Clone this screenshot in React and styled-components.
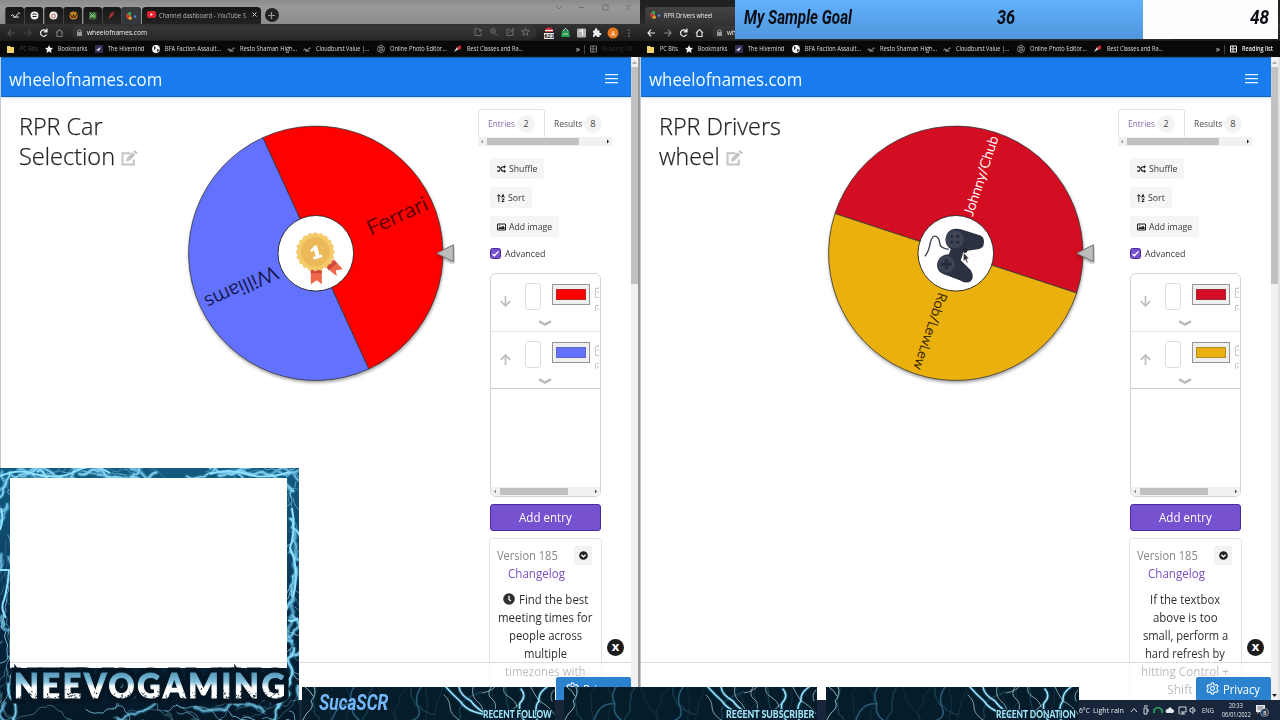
import React, { useLayoutEffect, useRef, useState } from 'react';
import styled, { createGlobalStyle, css } from 'styled-components';

const GlobalStyle = createGlobalStyle`
  * { box-sizing: border-box; }
  html, body { margin: 0; padding: 0; overflow: hidden; background: #fff; }
  body { font-family: 'Open Sans', 'Noto Sans', sans-serif; color: #363636; }
  svg { display: block; flex: none; }
`;

/* ---------- text condensed or widened to a given width ---------- */

const FitBox = styled.span`
  display: inline-block;
  flex: none;
  width: ${(p) => p.$width}px;
  white-space: nowrap;
  text-align: left;
`;
const FitInner = styled.span`
  display: inline-block;
  transform-origin: 0 50%;
`;

function Fit({ width, children }) {
  const ref = useRef(null);
  const [scale, setScale] = useState(1);
  useLayoutEffect(() => {
    const natural = ref.current.offsetWidth;
    if (natural) setScale(width / natural);
  }, [width, children]);
  return (
    <FitBox $width={width}>
      <FitInner ref={ref} style={{ transform: `scaleX(${scale})` }}>{children}</FitInner>
    </FitBox>
  );
}

/* ---------- desktop ---------- */

const Desktop = styled.div`
  position: relative;
  width: 1280px;
  height: 720px;
  display: flex;
  flex-direction: column;
  overflow: hidden;
`;
const Windows = styled.div`
  display: flex;
  height: 700px;
`;
const Window = styled.section`
  position: relative;
  width: 640px;
  height: 700px;
  display: flex;
  flex-direction: column;
  overflow: hidden;
  background: #fff;
`;

/* ---------- browser chrome ---------- */

const TabStrip = styled.div`
  height: 24px;
  display: flex;
  align-items: flex-end;
  padding-left: 5px;
  background: ${(p) => (p.$active ? 'linear-gradient(#202020, #282828)' : 'linear-gradient(#8b8b8b, #999 30%, #8d8d8d)')};
`;
const PinnedTab = styled.div`
  width: ${(p) => (p.$current ? 20 : 19)}px;
  height: 17px;
  margin-right: ${(p) => (p.$current ? 0.5 : 0.4)}px;
  display: flex;
  align-items: center;
  justify-content: center;
  border-radius: 3px 3px 0 0;
  border-left: 1px solid #454545;
  background: ${(p) => (p.$current ? '#34383b' : 'linear-gradient(#171717, #252525)')};
`;
const WideTab = styled.div`
  width: ${(p) => p.$width}px;
  height: 17px;
  display: flex;
  align-items: center;
  gap: 3px;
  padding: 0 5px 2px;
  border-radius: 4px 4px 0 0;
  color: ${(p) => (p.$light ? '#eee' : '#b4b4b4')};
  font-size: 7.5px;
  background: ${(p) => (p.$light ? 'linear-gradient(#444, #333)' : 'linear-gradient(#151515, #222)')};
`;
const NewTab = styled.div`
  width: 14px;
  height: 14px;
  margin: 0 0 2px 4px;
  border-radius: 50%;
  background: #222;
  display: flex;
  align-items: center;
  justify-content: center;
`;
const WindowButtons = styled.div`
  margin-left: auto;
  align-self: flex-start;
  padding: 3px 9px 0 0;
`;
const Toolbar = styled.div`
  height: 17px;
  display: flex;
  align-items: center;
  padding-left: 6px;
  background: linear-gradient(#333, #1c1c1c);
`;
const NavIcons = styled.div`
  width: 66px;
`;
const AddressBar = styled.div`
  width: 465px;
  height: 14px;
  display: flex;
  align-items: center;
  gap: 5px;
  padding: 0 5px 1px;
  border-radius: 7px;
  background: linear-gradient(#383838, #292929);
  color: #f1f1f1;
  font-size: 7.8px;
`;
const Spacer = styled.div`
  flex: 1;
`;
const Extensions = styled.div`
  display: flex;
  padding-left: 6px;
`;
const Bookmarks = styled.div`
  height: 16px;
  display: flex;
  align-items: center;
  padding-left: 7px;
  background: #080808;
  color: #dcdcdc;
  font-size: 6.8px;
  line-height: 14px;
`;
const Bookmark = styled.div`
  width: ${(p) => p.$slot}px;
  display: flex;
  align-items: center;
  gap: 4px;
  color: ${(p) => (p.$dim ? '#444' : 'inherit')};
`;
const ReadingList = styled.div`
  display: flex;
  align-items: center;
  gap: 4px;
  margin-left: auto;
  padding-right: 7px;
  font-weight: 600;
  color: ${(p) => (p.$dim ? '#262626' : '#eee')};
`;
const Chevrons = styled.span`
  color: #ccc;
  font-size: 9px;
  font-weight: 400;
  line-height: 12px;
`;
const Divider = styled.span`
  width: 1px;
  height: 9px;
  background: #444;
`;

/* ---------- page ---------- */

const Viewport = styled.div`
  flex: 1;
  display: flex;
  min-height: 0;
`;
const Page = styled.div`
  position: relative;
  width: 631px;
  display: flex;
  flex-direction: column;
  border-left: 1px solid #c3c8cd;
`;
const SiteHeader = styled.header`
  height: 40px;
  flex: none;
  display: flex;
  align-items: center;
  justify-content: space-between;
  padding: 3px 13px 0 8px;
  border-top: 1px solid #14589f;
  border-bottom: 1px solid #1262b8;
  background: #187bee;
  color: #eefcff;
  font-size: 17.5px;
  box-shadow: 0 1px 2px #c7ddf3;
`;
const Main = styled.main`
  display: flex;
  height: 603px;
  overflow: hidden;
`;
const TitleColumn = styled.div`
  width: 178px;
  padding: 14px 0 0 18px;
`;
const Title = styled.h1`
  margin: 0;
  font-size: 24.5px;
  line-height: 30px;
  font-weight: 300;
  color: #222;
  -webkit-text-stroke: 0.25px #222;
`;
const TitleLine = styled.div`
  display: flex;
  align-items: center;
  gap: 6px;
  height: 30px;
`;
const EditHolder = styled.div`
  padding-top: 3px;
`;
const WheelHolder = styled.div`
  width: 299px;
  padding-top: 17px;
`;
const Side = styled.aside`
  width: 137px;
  padding-top: 12px;
  font-size: 9.3px;
`;
const Tabs = styled.div`
  width: 135px;
  height: 28px;
  display: flex;
`;
const Tab = styled.div`
  width: 67px;
  display: flex;
  align-items: center;
  gap: 2px;
  padding-left: ${(p) => (p.$active ? 9 : 8)}px;
  border: 1px solid ${(p) => (p.$active ? '#e3e3e3' : 'transparent')};
  border-bottom: 0;
  border-radius: 3px 3px 0 0;
  color: ${(p) => (p.$active ? '#8569ad' : '#484848')};
`;
const Count = styled.span`
  width: 18px;
  height: 18px;
  border-radius: 50%;
  background: #f3f3f3;
  color: #444;
  text-align: center;
  line-height: 18px;
`;
const HScroll = styled.div`
  width: ${(p) => p.$track || 134}px;
  height: 9px;
  display: flex;
  align-items: center;
  justify-content: space-between;
  padding: 0 2px;
  background: #f1f1f1;
`;
const HThumb = styled.div`
  width: ${(p) => p.$width}px;
  height: 100%;
  border: solid #f1f1f1;
  border-width: 1px 0;
  margin-right: auto;
  margin-left: ${(p) => p.$offset}px;
  background: #c1c1c1;
`;
const Controls = styled.div`
  display: flex;
  flex-direction: column;
  align-items: flex-start;
  padding: 12px 0 0 12px;
`;
const GreyButton = styled.div`
  height: 21px;
  margin-bottom: 8px;
  padding: 0 7px;
  display: flex;
  align-items: center;
  gap: 3px;
  border-radius: 2px;
  background: #f5f5f5;
  color: #363636;
`;
const Advanced = styled.div`
  display: flex;
  align-items: center;
  gap: 4px;
  height: 13px;
  margin-top: 2px;
`;
const EntryBox = styled.div`
  width: 111px;
  height: 224px;
  margin-top: 13px;
  display: flex;
  flex-direction: column;
  border: 1.5px solid #d4d4d4;
  border-radius: 6px;
  overflow: hidden;
`;
const EntryRow = styled.div`
  height: 57.5px;
  flex: none;
  border-bottom: 1px solid ${(p) => (p.$last ? '#cfcfcf' : '#e8e8e8')};
  display: flex;
  flex-direction: column;
  align-items: center;
  gap: 9px;
  padding: 9px 1px 0 0;
`;
const EntryFields = styled.div`
  width: 108px;
  height: 28px;
  display: flex;
  align-items: flex-start;
  overflow: hidden;
`;
const MoveIcon = styled.div`
  width: 34px;
  padding: 13px 0 0 9px;
`;
const NameInput = styled.div`
  width: 16px;
  height: 27px;
  margin-right: 11px;
  border: 1px solid #dedede;
  border-radius: 3px;
`;
const ColorInput = styled.div`
  width: 38px;
  height: 21px;
  margin: 1px 4px 0 0;
  padding: 4px 3px;
  border: 1px solid #949494;
  background: #efefef;
`;
const Swatch = styled.div`
  height: 100%;
  background: ${(p) => p.$color};
  border: 1px solid rgba(90, 90, 90, 0.4);
`;
const AddEntry = styled.div`
  width: 111px;
  height: 27px;
  margin-top: 6.5px;
  display: flex;
  align-items: center;
  justify-content: center;
  border: 1px solid #4b2ca0;
  border-radius: 3px;
  background: #7752d0;
  color: #fff;
  font-size: 12px;
`;
const VersionCard = styled.div`
  width: 113px;
  height: 175px;
  margin-top: 7px;
  margin-left: -1px;
  padding: 7px 9px 7px 7px;
  border: 1px solid #e2e2e2;
  border-radius: 3px;
  font-size: 11.8px;
  line-height: 18px;
  color: #2f2f2f;
`;
const VersionRow = styled.div`
  display: flex;
  justify-content: space-between;
  height: 18px;
  color: #858585;
`;
const Toggle = styled.div`
  width: 18px;
  height: 19px;
  background: #f3f3f3;
  display: flex;
  align-items: center;
  justify-content: center;
`;
const Changelog = styled.div`
  padding-left: 11px;
  color: #7b4fc0;
`;
const Tip = styled.div`
  margin: 8px -8px 0 -7px;
`;
const TipLine = styled.div`
  height: 18px;
  display: flex;
  justify-content: center;
  align-items: center;
  gap: 4px;
`;
const Footer = styled.div`
  position: absolute;
  left: 0;
  right: 0;
  bottom: 0;
  height: 38px;
  border-top: 1px solid #dcdcdc;
  background: rgba(255, 255, 255, 0.68);
`;
const CloseBadge = styled.div`
  position: absolute;
  right: 7px;
  bottom: 44px;
  width: 17px;
  height: 17px;
  border-radius: 50%;
  background: #1c1c1c;
  color: #fff;
  font: 700 13px/14px 'Open Sans', sans-serif;
  text-align: center;
`;
const Privacy = styled.div`
  position: absolute;
  right: 0;
  bottom: 0;
  width: 75px;
  height: 23px;
  display: flex;
  align-items: center;
  gap: 4px;
  padding-left: 10px;
  border-radius: 2px 2px 0 0;
  background: #2b83cf;
  color: #fff;
  font-size: 11.8px;
`;
const VScroll = styled.div`
  width: 9px;
  display: flex;
  flex-direction: column;
  align-items: center;
  padding: 4px 0 3px;
  background: #f1f1f1;
  border-right: ${(p) => (p.$edge ? '2px solid #9a9a9a' : '2px solid #e2e2e2')};
`;
const VThumb = styled.div`
  width: 7px;
  height: 217px;
  margin: 3px 0 auto;
  background: #c1c1c1;
`;

/* ---------- stream overlays ---------- */

const brush = css`
  font-family: 'Liberation Sans Narrow', 'Roboto', sans-serif;
  font-style: italic;
  font-weight: 700;
`;
const GoalBar = styled.div`
  position: absolute;
  left: 735px;
  top: 0;
  width: 543px;
  height: 39px;
  display: flex;
  align-items: center;
  background: linear-gradient(90deg, transparent 408px, #fdfdfd 408px), linear-gradient(#63b1fc, #4f96dd);
  color: #0a0d14;
  font-size: 20px;
  padding: 0 9px 5px 9px;
  ${brush}
`;
const GoalGap = styled.div`
  width: ${(p) => p.$width}px;
`;
const CamFrame = styled.div`
  position: absolute;
  left: 0;
  top: 468px;
`;
const camLettering = css`
  position: absolute;
  left: 14px;
  top: 194px;
  height: 46px;
  font-family: 'Lato', sans-serif;
  font-weight: 900;
  font-size: 34px;
  line-height: 46px;
  letter-spacing: 3px;
`;
const CamName = styled.div`
  ${camLettering}
  color: #041523;
  -webkit-text-stroke: 11px #041523;
`;
const CamNameFace = styled.div`
  ${camLettering}
  span span {
    -webkit-text-stroke: 1.2px transparent;
    background: linear-gradient(#5a9dbd 12px, #86c2dc 20px, #fff 25px);
    background-clip: text;
    -webkit-background-clip: text;
    color: transparent;
  }
`;
const CamSpeckles = styled.div`
  position: absolute;
  left: 12px;
  top: 219px;
`;
const Alerts = styled.div`
  position: absolute;
  left: 302px;
  top: 687px;
  display: flex;
  gap: 9px;
`;
const Alert = styled.div`
  position: relative;
  width: 253px;
  height: 33px;
  overflow: hidden;
`;
const AlertName = styled.div`
  position: absolute;
  left: 17px;
  top: 2px;
  color: #74b9fb;
  font-size: 22px;
  line-height: 28px;
  ${brush}
`;
const AlertLabel = styled.div`
  position: absolute;
  right: 3px;
  bottom: 0;
  color: #a5e3f7;
  font-size: 10.5px;
  line-height: 12px;
  -webkit-text-stroke: 2px #06202f;
  paint-order: stroke fill;
  font-family: 'Lato', sans-serif;
  font-weight: 900;
`;

/* ---------- taskbar ---------- */

const Taskbar = styled.div`
  height: 20px;
  display: flex;
  align-items: center;
  padding-left: 1079px;
  background: #19253a;
  color: #e8ecf2;
  font-size: 7.3px;
  line-height: 9px;
`;
const Weather = styled.div`
  width: 51px;
  display: flex;
  gap: 3px;
`;
const Tray = styled.div`
  width: 72px;
`;
const Lang = styled.div`
  width: 15px;
`;
const Clock = styled.div`
  width: 38px;
  display: flex;
  flex-direction: column;
  align-items: center;
`;

/* ---------- lightning drawing ---------- */

function makeRandom(seed) {
  let s = seed;
  return () => {
    s = (s * 16807) % 2147483647;
    return s / 2147483647;
  };
}

function bolt(rand, x, y, angle, steps, size, wobble) {
  let d = `M${x.toFixed(1)} ${y.toFixed(1)}`;
  let a = angle;
  for (let i = 0; i < steps; i += 1) {
    const bend = (rand() - 0.5) * wobble;
    const mx = x + Math.cos(a + bend) * size * 0.6;
    const my = y + Math.sin(a + bend) * size * 0.6;
    a += (rand() - 0.5) * wobble * 0.6;
    x += Math.cos(a) * size;
    y += Math.sin(a) * size;
    d += `Q${mx.toFixed(1)} ${my.toFixed(1)} ${x.toFixed(1)} ${y.toFixed(1)}`;
  }
  return d;
}

const camBolts = (() => {
  const r = makeRandom(4711);
  const list = [];
  const add = (x, y, a, n) => {
    for (let i = 0; i < n; i += 1) {
      list.push({ d: bolt(r, x(), y(), a + (r() - 0.5) * 0.7, 5 + Math.floor(r() * 5), 9, 2.1), w: r() > 0.65 ? 1.6 + r() : 0.4 + r() * 0.5, o: 0.45 + r() * 0.55 });
    }
  };
  add(() => r() * 290, () => r() * 10, 0, 46);
  add(() => r() * 10, () => r() * 240, Math.PI / 2, 30);
  add(() => 288 + r() * 10, () => r() * 240, Math.PI / 2, 32);
  add(() => r() * 290, () => 236 + r() * 16, 0.2, 22);
  return list;
})();

function CamLightning() {
  return (
    <svg width="299" height="252" viewBox="0 0 299 252">
      <defs>
        <clipPath id="ring">
          <path clipRule="evenodd" d="M0 0H299V252H0ZM10 10V200H287V10Z" />
        </clipPath>
        <linearGradient id="camBg" x1="0" y1="0" x2="0" y2="1">
          <stop offset="0" stopColor="#145a80" />
          <stop offset="0.35" stopColor="#0d4468" />
          <stop offset="0.65" stopColor="#06263f" />
          <stop offset="1" stopColor="#041826" />
        </linearGradient>
      </defs>
      <g clipPath="url(#ring)">
        <rect width="299" height="252" fill="url(#camBg)" />
        {camBolts.map((b, i) => (
          <g key={i} fill="none" strokeLinecap="round">
            {b.w > 1.5 && <path d={b.d} stroke="#3a9fce" strokeWidth={b.w + 2.5} opacity="0.4" />}
            <path d={b.d} stroke="#8ed9f7" strokeWidth={b.w} opacity={b.o} />
          </g>
        ))}
        <path d="M0 102H9Q8 118 4 132Q0 140 6 150M292 40Q296 62 290 80Q300 100 293 130M298 150Q292 155 288 152M0 62Q4 52 1 40M0 8Q20 0 34 6Q60 12 76 3T110 5M210 6Q228 0 246 6T290 4" fill="none" stroke="#8ee2ff" strokeWidth="2" />
      </g>
    </svg>
  );
}

const speckles = (() => {
  const r = makeRandom(52);
  let d = '';
  for (let i = 0; i < 300; i += 1) {
    const x = r() * 270;
    const y = 2 + Math.sqrt(r()) * 11;
    d += `M${x.toFixed(1)} ${y.toFixed(1)}l${((r() - 0.5) * 4).toFixed(1)} ${((r() - 0.5) * 4).toFixed(1)}`;
  }
  return d;
})();

const faintBolts = (() => {
  const r = makeRandom(909);
  return Array.from({ length: 15 }, (_, i) => bolt(r, 12 + i * 16, i % 2 ? 34 : -1, i % 2 ? -1.3 : 1.4, 5, 8, 1.3));
})();

function AlertLightning() {
  return (
    <svg width="253" height="33" viewBox="0 0 253 33">
      <rect width="253" height="33" fill="#051c2a" />
      <g fill="none" strokeLinecap="round">
        {faintBolts.map((d, i) => (
          <path key={i} d={d} stroke="#1d475e" strokeWidth={i % 3 ? 0.6 : 1.4} opacity="0.8" />
        ))}
        <path d="M12 0Q15 8 9 14Q13 20 5 26Q2 30 1 33M3 0Q9 4 11 9" stroke="#a8ddea" strokeWidth="0.8" />
        <path d="M52 0Q46 8 51 17Q48 26 57 33M51 17Q36 15 30 33M119 0Q112 10 116 20T111 33" stroke="#285a75" strokeWidth="1.6" />
        <path d="M144 0Q151 8 158 14Q163 22 173 25L184 28M157 0Q158 8 169 14Q173 20 181 25M219 2Q225 9 218 16Q216 25 222 33M245 0Q236 6 237 14Q232 19 235 33" stroke="#286f91" strokeWidth="3.5" opacity="0.5" />
        <path d="M144 0Q151 8 158 14Q163 22 173 25L184 28M157 0Q158 8 169 14Q173 20 181 25M219 2Q225 9 218 16Q216 25 222 33M245 0Q236 6 237 14Q232 19 235 33" stroke="#9fe3fb" strokeWidth="1.5" />
        <path d="M171 0Q169 9 175 14T182 27M189 0Q184 8 190 12T192 26M142 8Q148 13 148 20T157 33M180 6Q190 4 193 0M202 0Q200 6 207 10T215 20M218 16L206 27M237 14Q247 19 252 27M229 0Q232 7 237 14M252 3Q247 8 250 14" stroke="#b8e6f1" strokeWidth="0.65" />
      </g>
    </svg>
  );
}

/* ---------- wheels ---------- */

function Wheel({ id, cut, colorA, colorB, labelA, labelB, size, lenA, lenB, startA, startB, inkA, inkB, family, children }) {
  const rad = (cut * Math.PI) / 180;
  const R = 127.2;
  const px = Math.cos(rad) * R;
  const py = Math.sin(rad) * R;
  return (
    <svg width="280" height="280" viewBox="0 0 280 280">
      <defs>
        <filter id={id} x="-10%" y="-10%" width="120%" height="120%">
          <feDropShadow dx="0.5" dy="2" stdDeviation="1.6" floodColor="#000" floodOpacity="0.35" />
        </filter>
      </defs>
      <g transform="translate(136.8 139.3)">
        <g filter={`url(#${id})`} stroke="#333" strokeWidth="0.8">
          <path d={`M${px} ${py}A${R} ${R} 0 0 1 ${-px} ${-py}Z`} fill={colorA} />
          <path d={`M${-px} ${-py}A${R} ${R} 0 0 1 ${px} ${py}Z`} fill={colorB} />
        </g>
        <g fontFamily={family} fontSize={size} fontWeight="300" strokeWidth="0.35">
          <text transform={`rotate(${cut + 90})`} x={startA} y={size * 0.33} textLength={lenA} lengthAdjust="spacingAndGlyphs" fill={inkA} stroke={inkA}>{labelA}</text>
          <text transform={`rotate(${cut + 270})`} x={startB} y={size * 0.33} textLength={lenB} lengthAdjust="spacingAndGlyphs" fill={inkB} stroke={inkB}>{labelB}</text>
        </g>
        <circle r="37.8" fill="#fff" stroke="#222" strokeWidth="0.9" />
        {children}
        <path d="M121 0L137.500 -8.500V8.500Z" fill="#bdbdbd" stroke="#6f6f6f" strokeWidth="1" filter={`url(#${id})`} />
      </g>
    </svg>
  );
}

function Medal() {
  const teeth = Array.from({ length: 40 }, (_, i) => {
    const r = i % 2 ? 17.9 : 19.8;
    const a = (i * Math.PI) / 20;
    return `${(Math.cos(a) * r).toFixed(2)},${(Math.sin(a) * r).toFixed(2)}`;
  }).join(' ');
  return (
    <g>
      <path d="M-5 15H6V31L1 27L-5 31Z" fill="#ee684b" />
      <path d="M9 13L18 6L27 16L20 17L21 23Z" fill="#ee684b" />
      <path d="M-5 17H6V20H-5ZM11 14L19 8L21 10L13 17Z" fill="#c94938" />
      <g transform="translate(-0.500 -1.500)">
        <polygon points={teeth} fill="#f5cb69" />
        <circle r="14.5" fill="#ecb958" />
        <path d="M-5 -1.500L-1 -6L1.500 -6.500L4.200 3.200L6.500 2.600L7.200 5.200L-1.500 8L-2.300 5.300L0.300 4.500L-1.300 -1.500L-3.800 0.500Z" fill="#fff" />
      </g>
    </g>
  );
}

function Gamepad() {
  return (
    <g>
      <path d="M-7 -4Q-16 -5 -16 -10Q-17 -18 -22 -17Q-25 -15 -26 -8Q-28 0 -31 3" fill="none" stroke="#343a49" strokeWidth="1.300" />
      <path d="M-9 -19Q-5 -26 5 -24L24 -18Q29 -16 28 -10Q28 -5 22 -4L8 -2L5 7L15 17Q19 24 15 28Q10 31 4 27L-12 21Q-21 17 -18 8Q-15 1 -7 1L-5 -4Q-13 -10 -9 -19Z" fill="#2b3140" />
      <circle cx="-1" cy="-14" r="9" fill="#3d4456" />
      <circle cx="-9.500" cy="11" r="8.500" fill="#3d4456" />
      <g fill="#252a37">
        <circle cx="-4" cy="-17" r="1.500" /><circle cx="2" cy="-17" r="1.500" />
        <circle cx="-4" cy="-11" r="1.500" /><circle cx="2" cy="-11" r="1.500" />
        <circle cx="9" cy="-3" r="2.600" />
        <path d="M-11 6H-8V9.500H-4V12.500H-8V16H-11V12.500H-15V9.500H-11Z" />
      </g>
      <path d="M7.500 -1V8L9.500 6.500L11 10L12.300 9L11 6L13 5Z" fill="#333" stroke="#eee" strokeWidth="0.700" />
    </g>
  );
}

/* ---------- small icons ---------- */

const EditIcon = () => (
  <svg width="18" height="16" viewBox="0 0 18 16" fill="none" stroke="#c4c4c4" strokeWidth="2">
    <path d="M9.500 3.200H1.500V14.500H12.800V9.500" />
    <path d="M5 11.500L5.800 8L11.500 2.300L14.200 5L8.500 10.700ZM12.300 1.500L13.800 0L16.800 2.800L15.100 4.300Z" fill="#c4c4c4" stroke="none" />
  </svg>
);
const MenuIcon = () => (
  <svg width="13" height="10" viewBox="0 0 13 10" stroke="#e6f6ff" strokeWidth="1.200">
    <path d="M0 0.700H13M0 4.700H13M0 8.700H13" />
  </svg>
);
const Arrow = ({ left, color = '#333' }) => (
  <svg width="4" height="5" viewBox="0 0 4 5"><path d={left ? 'M3 0.500V4.500L1 2.500Z' : 'M1 0.500V4.500L3 2.500Z'} fill={color} /></svg>
);
const VArrow = ({ down, color }) => (
  <svg width="5" height="3" viewBox="0 0 5 3"><path d={down ? 'M0 0H5L2.500 3Z' : 'M0 3H5L2.500 0Z'} fill={color} /></svg>
);
const ShuffleIcon = () => (
  <svg width="9" height="8" viewBox="0 0 9 8" fill="none" stroke="#222" strokeWidth="1.300">
    <path d="M0 1.800H2L5.500 6.200H8M0 6.200H2L3 5M4.300 3.200L5.500 1.800H8" />
    <path d="M7 0L9 1.800L7 3.600ZM7 4.400L9 6.200L7 8Z" fill="#222" stroke="none" />
  </svg>
);
const SortIcon = () => (
  <svg width="8" height="8" viewBox="0 0 8 8" fill="none" stroke="#222" strokeWidth="1">
    <path d="M1.800 8V1M0.200 2.500L1.800 0.600L3.400 2.500M4.600 3.500L6 0.500L7.400 3.500M5 2.600H7M4.800 5H7.200L4.800 7.500H7.300" />
  </svg>
);
const ImageIcon = () => (
  <svg width="9" height="8" viewBox="0 0 9 8" fill="none" stroke="#222" strokeWidth="1">
    <path d="M0.500 1H8.500V7H0.500Z" />
    <path d="M1.500 6V5L3 3.800L4 4.600L6 2.800L7.600 4.500V6Z" fill="#222" stroke="none" />
    <circle cx="2.600" cy="2.600" r="0.600" fill="#222" stroke="none" />
  </svg>
);
const CheckIcon = () => (
  <svg width="11" height="11" viewBox="0 0 11 11">
    <rect x="0.500" y="0.500" width="10" height="10" rx="2" fill="#7752d0" stroke="#4a2d9c" />
    <path d="M2.500 6L4.300 7.700L8.500 3.500" fill="none" stroke="#fff" strokeWidth="1.400" />
  </svg>
);
const MoveArrow = ({ up }) => (
  <svg width="11" height="11" viewBox="0 0 11 11" fill="none" stroke="#bdbdbd" strokeWidth="1.700">
    <path d={up ? 'M5.500 11V1M0.800 5.800L5.500 1L10.200 5.800' : 'M5.500 0V10M0.800 5.200L5.500 10L10.200 5.200'} />
  </svg>
);
const RowChevron = () => (
  <svg width="14" height="7" viewBox="0 0 14 7" fill="none" stroke="#b8b8b8" strokeWidth="2.300"><path d="M1 1.200L7 4.600L13 1.200" /></svg>
);
const ClippedIcons = () => (
  <svg width="5" height="28" viewBox="0 0 5 28" fill="none" stroke="#c6c6c6" strokeWidth="1">
    <path d="M5 5.500H1.500V14.500H5M3 9H5M3 5.500L5 3.500M5 22.500H1.500V30M3 26H5" />
  </svg>
);
const DownCircle = () => (
  <svg width="9" height="9" viewBox="0 0 9 9"><circle cx="4.500" cy="4.500" r="4.300" fill="#222" /><path d="M2.400 3.700L4.500 5.800L6.600 3.700" fill="none" stroke="#fff" strokeWidth="1.300" /></svg>
);
const ClockIcon = () => (
  <svg width="12" height="12" viewBox="0 0 12 12"><circle cx="6" cy="6" r="5.800" fill="#303030" /><path d="M6 2.800V6.400L7.800 8" fill="none" stroke="#fff" strokeWidth="1.300" /></svg>
);
const GearIcon = () => (
  <svg width="13" height="13" viewBox="0 0 24 24" fill="none" stroke="#fff" strokeWidth="1.900">
    <circle cx="12" cy="12" r="3.600" />
    <path d="M10 2H14L14.700 5L17 6.100L19.800 4.900L22.200 8L20.300 10.500V13.300L22.300 16L20 19.300L17 18.200L14.700 19.300L14 22H10L9.300 19.300L7 18.200L4 19.300L1.700 16L3.700 13.300V10.500L1.800 8L4.200 4.900L7 6.100L9.300 5Z" />
  </svg>
);
const WheelFavicon = () => (
  <svg width="11" height="8" viewBox="0 0 11 8">
    <path d="M5 4L1 1.500A4 4 0 0 0 2 7Z" fill="#d33b32" /><path d="M5 4L1 2A4 4 0 0 1 5 0Z" fill="#38a853" />
    <path d="M5 4L2 7A4 4 0 0 0 6 7Z" fill="#f0b323" /><circle cx="9" cy="4.500" r="1.300" fill="#4a7fe0" />
  </svg>
);
const tabIcons = [
  <path key="a" d="M0 5Q2 2 3 5T6 4T9 3M2 6H8" fill="none" stroke="#ddd" />,
  <g key="b"><circle cx="4.500" cy="4.500" r="4" fill="#eee" /><path d="M2.500 3.500Q4.500 2 6.500 3.500M2.500 5.500H6.500" stroke="#222" fill="none" /></g>,
  <g key="c"><circle cx="4.500" cy="4.500" r="4" fill="#f6eeee" /><circle cx="4.500" cy="5" r="2" fill="none" stroke="#b66" /></g>,
  <g key="d"><circle cx="4.500" cy="4.500" r="4" fill="#c68324" /><path d="M1 3L3.500 7L4.500 3.500L5.500 7L8 3" fill="none" stroke="#402508" /></g>,
  <g key="e"><rect x="1" y="1" width="7.500" height="7.500" fill="#35603a" /><path d="M2 2L7 7M7 2L2 7M2 5H8" stroke="#8fd089" /></g>,
  <path key="f" d="M1 8L4 2L8 0L5 4L8 3L4 6Z" fill="#b5373d" />,
];
const ToolIcons = () => (
  <svg width="58" height="10" viewBox="0 0 58 10" fill="none" stroke="#747474" strokeWidth="0.900">
    <path d="M3 1.500H1V8.500H7V6M4 1L7 4M5 4H7V2" />
    <circle cx="19" cy="4" r="2.300" /><path d="M21 6L23 8.500M18 4H20" />
    <path d="M36 2.500H33V8.500H39V5M35 6Q36 3 40 3M38 1L40 3L38 5" />
    <path d="M51.500 1L52.500 3.800H55.500L53.200 5.500L54 8.500L51.500 6.700L49 8.500L49.800 5.500L47.500 3.800H50.500Z" />
  </svg>
);
const ExtIcons = () => (
  <svg width="92" height="14" viewBox="0 0 92 14">
    <path d="M2 6Q2 1 6.500 1.500T10 6Z" fill="#ce2f38" /><path d="M2 4.500H10" stroke="#eee" strokeWidth="1.200" />
    <rect x="1" y="7" width="10" height="6" fill="#eee" />
    <text x="1.300" y="12.400" fontSize="5.800" fontWeight="700" fontFamily="Roboto" fill="#111">622</text>
    <path d="M19 4.500H26L27 11H18Z" fill="#239b51" /><path d="M20.500 5Q22.500 0 24.500 5M20 8H25" fill="none" stroke="#bfe5cb" />
    <rect x="34" y="2.500" width="9" height="9" rx="1" fill="#b4b4b4" /><path d="M36 5H39.500V9.500M38 4L40 3.500" stroke="#fff" fill="none" />
    <path d="M50 4.500H52Q51.500 2 53 2T54.500 4.500H56.500V7Q58.500 6.500 58.500 8T56.500 9V11H54Q54 9 52.500 9.500T51.500 11H50V8.500Q52 8 50 6.500Z" fill="#eee" />
    <circle cx="70" cy="7" r="5.500" fill="#e8771e" /><text x="68" y="9.500" fontSize="6.500" fontFamily="Roboto" fill="#fff">A</text>
    <path d="M86 3.500V5M86 6.500V8M86 9.500V11" stroke="#888" strokeWidth="1.200" />
  </svg>
);
function NavSvg({ active }) {
  const c = active ? '#e6e6e6' : '#555';
  return (
    <svg width="60" height="12" viewBox="0 0 60 12" fill="none" strokeWidth="1.200">
      <path d="M9 6H2M5 2.700L2 6L5 9.300" stroke={c} />
      <path d="M18 6H25M22 2.700L25 6L22 9.300" stroke={active ? '#888' : '#444'} />
      <path d="M40.500 4.500A3.200 3.200 0 1 0 40.600 7.500M41 1.500V4.800H37.800" stroke="#f0f0f0" />
      <path d="M50 6L53.500 2.500L57 6M51 5.500V9.500H56V5.500" stroke={active ? '#ddd' : '#777'} />
    </svg>
  );
}
const bookmarkIcons = {
  folder: <path d="M0 1H3L4 2H7V8H0Z" fill="#f3d36c" />,
  star: <path d="M4 0L5.200 2.700L8 3L6 5L6.500 8L4 6.500L1.500 8L2 5L0 3L2.800 2.700Z" fill="#f2f2f2" />,
  hive: <g><rect width="8" height="8" fill="#342f54" /><path d="M1 5L6 2L4 6Z" fill="#ddd" /></g>,
  globe: <g><circle cx="4" cy="4" r="3.900" fill="#f0f0f0" /><path d="M2 1L4 3L2 5ZM5 4L7.500 5L5 7Z" fill="#222" /></g>,
  wow: <path d="M0.500 5Q2 3 3 4.700T5.500 4T7.500 3.500M2 6H6.500" fill="none" stroke="#bbb" strokeWidth="0.900" />,
  photo: <g fill="none" stroke="#8b8b8b" strokeWidth="0.800"><circle cx="4" cy="4" r="3.600" /><path d="M1 2L6 3M5 0.500L5 6M7 5L2 5M3 7L3 2" /></g>,
  best: <g><path d="M0 7L3 2L5 4Z" fill="#ddd" /><path d="M3 2L7 0L7 4L4 5Z" fill="#c92f3a" /></g>,
};
const bookmarks = [
  { icon: 'folder', label: 'PC Bits', slot: 38, width: 18 },
  { icon: 'star', label: 'Bookmarks', slot: 50, width: 29.5 },
  { icon: 'hive', label: 'The Hivemind', slot: 57, width: 36.5 },
  { icon: 'globe', label: 'BFA Faction Assault...', slot: 74.5, width: 56 },
  { icon: 'wow', label: 'Resto Shaman High...', slot: 76.5, width: 57 },
  { icon: 'wow', label: 'Cloudburst Value |...', slot: 73.5, width: 53 },
  { icon: 'photo', label: 'Online Photo Editor...', slot: 77, width: 57 },
  { icon: 'best', label: 'Best Classes and Ra...', slot: 80, width: 56 },
];
const TrayIcons = () => (
  <svg width="67" height="14" viewBox="0 0 67 14" fill="none" stroke="#e8ecf2" strokeWidth="0.900">
    <path d="M1 9L4 5.500L7 9" />
    <path d="M14 5H17V11H14ZM14 3H18M18 6V9" />
    <path d="M24 10V7Q28 2 32 7V10M24 8V10M32 8V10" stroke="#2cae58" strokeWidth="1.600" />
    <path d="M36.500 9.500Q35 6.500 38 6.500Q40 3 42 6.500Q45 7 43 9.500Z" fill="#e8ecf2" />
    <path d="M49 4H56V9H51M53 9V11M50 11H55M49 4V11" />
    <path d="M60 6V8.500H61L63 10.500V4L61 6ZM64.500 5.500Q65.500 7 64.500 9" />
  </svg>
);
const NoticeIcon = () => (
  <svg width="14" height="13" viewBox="0 0 14 13">
    <path d="M1 1H10V8H4L2.500 10V8H1Z" fill="#e8ecf2" /><path d="M2.500 3H8.500M2.500 5H7" stroke="#334" strokeWidth="0.700" />
    <circle cx="9.500" cy="8.500" r="4" fill="#28364c" stroke="#ccd" strokeWidth="0.600" />
    <text x="7.900" y="11" fontSize="6" fontFamily="Roboto" fill="#fff">8</text>
  </svg>
);

/* ---------- composition ---------- */

function BookmarkBar({ active }) {
  return (
    <Bookmarks>
      {bookmarks.map((b, i) => (
        <Bookmark key={b.label} $slot={b.slot} $dim={!active && i === 0}>
          <svg width="9" height="8" viewBox="0 0 9 8">{bookmarkIcons[b.icon]}</svg>
          <Fit width={b.width}>{b.label}</Fit>
        </Bookmark>
      ))}
      <ReadingList $dim={!active}>
        <Chevrons>»</Chevrons>
        <Divider />
        <svg width="9" height="8" viewBox="0 0 9 8" fill="none" stroke={active ? '#eee' : '#777'}><path d="M1.500 1H7.500V7H1.500ZM1.500 4H7.500M4 1V7" /></svg>
        <Fit width={31}>Reading list</Fit>
      </ReadingList>
    </Bookmarks>
  );
}

function LeftChrome() {
  return (
    <>
      <TabStrip>
        {tabIcons.map((icon, i) => (
          <PinnedTab key={i}><svg width="9" height="9" viewBox="0 0 9 9">{icon}</svg></PinnedTab>
        ))}
        <PinnedTab $current><WheelFavicon /></PinnedTab>
        <WideTab $width={119}>
          <svg width="9" height="7" viewBox="0 0 9 7"><rect width="9" height="7" rx="2" fill="#e3202b" /><path d="M3.500 2V5L6 3.500Z" fill="#fff" /></svg>
          <Fit width={87}>Channel dashboard - YouTube S</Fit>
          <Spacer />
          <svg width="5" height="5" viewBox="0 0 5 5"><path d="M0.500 0.500L4.500 4.500M4.500 0.500L0.500 4.500" stroke="#ccc" /></svg>
        </WideTab>
        <NewTab><svg width="7" height="7" viewBox="0 0 7 7"><path d="M3.500 0V7M0 3.500H7" stroke="#999" strokeWidth="1.200" /></svg></NewTab>
        <WindowButtons>
          <svg width="76" height="9" viewBox="0 0 76 9" fill="none" stroke="#727272">
            <path d="M1 3L4 6L7 3M24 4.500H29M48 2H53V7H48ZM71 2L76 7M76 2L71 7" />
          </svg>
        </WindowButtons>
      </TabStrip>
      <Toolbar>
        <NavIcons><NavSvg /></NavIcons>
        <AddressBar>
          <svg width="5" height="7" viewBox="0 0 5 7"><path d="M0 3H5V7H0Z" fill="#999" /><path d="M1 3V1.500Q2.500 0 4 1.500V3" fill="none" stroke="#999" /></svg>
          <Fit width={60}>wheelofnames.com</Fit>
          <Spacer />
          <ToolIcons />
        </AddressBar>
        <Extensions><ExtIcons /></Extensions>
      </Toolbar>
    </>
  );
}

function RightChrome() {
  return (
    <>
      <TabStrip $active>
        <WideTab $width={120} $light>
          <WheelFavicon />
          <Fit width={48}>RPR Drivers wheel</Fit>
        </WideTab>
      </TabStrip>
      <Toolbar>
        <NavIcons><NavSvg active /></NavIcons>
        <AddressBar>
          <svg width="5" height="7" viewBox="0 0 5 7"><path d="M0 3H5V7H0Z" fill="#999" /><path d="M1 3V1.500Q2.500 0 4 1.500V3" fill="none" stroke="#999" /></svg>
          <Fit width={9}>wh</Fit>
        </AddressBar>
      </Toolbar>
    </>
  );
}

function Entry({ color, up, last }) {
  return (
    <EntryRow $last={last}>
      <EntryFields>
        <MoveIcon><MoveArrow up={up} /></MoveIcon>
        <NameInput />
        <ColorInput><Swatch $color={color} /></ColorInput>
        <ClippedIcons />
      </EntryFields>
      <RowChevron />
    </EntryRow>
  );
}

function SidePanel({ colors, tip }) {
  return (
    <Side>
      <Tabs>
        <Tab $active><Fit width={27}>Entries</Fit><Count>2</Count></Tab>
        <Tab><Fit width={28}>Results</Fit><Count>8</Count></Tab>
      </Tabs>
      <HScroll><Arrow left color="#999" /><HThumb $width={92} $offset={3} /><Arrow color="#111" /></HScroll>
      <Controls>
        <GreyButton><ShuffleIcon /><Fit width={28}>Shuffle</Fit></GreyButton>
        <GreyButton><SortIcon /><Fit width={17}>Sort</Fit></GreyButton>
        <GreyButton><ImageIcon /><Fit width={43}>Add image</Fit></GreyButton>
        <Advanced><CheckIcon /><Fit width={40}>Advanced</Fit></Advanced>
        <EntryBox>
          <Entry color={colors[0]} />
          <Entry color={colors[1]} up last />
          <Spacer />
          <HScroll $track={109}><Arrow left color="#888" /><HThumb $width={68} $offset={3} /><Arrow color="#444" /></HScroll>
        </EntryBox>
        <AddEntry><Fit width={53}>Add entry</Fit></AddEntry>
        <VersionCard>
          <VersionRow><Fit width={61}>Version 185</Fit><Toggle><DownCircle /></Toggle></VersionRow>
          <Changelog><Fit width={57}>Changelog</Fit></Changelog>
          <Tip>
            {tip.map(([text, width]) => (
              <TipLine key={text}>
                {text.startsWith('Find') && <ClockIcon />}
                <Fit width={width}>{text}</Fit>
              </TipLine>
            ))}
          </Tip>
        </VersionCard>
      </Controls>
    </Side>
  );
}

function WheelPage({ lines, wheel, colors, tip, edge }) {
  return (
    <Viewport>
      <Page>
        <SiteHeader><Fit width={153}>wheelofnames.com</Fit><MenuIcon /></SiteHeader>
        <Main>
          <TitleColumn>
            <Title>
              <TitleLine><Fit width={lines[0][1]}>{lines[0][0]}</Fit></TitleLine>
              <TitleLine><Fit width={lines[1][1]}>{lines[1][0]}</Fit><EditHolder><EditIcon /></EditHolder></TitleLine>
            </Title>
          </TitleColumn>
          <WheelHolder>{wheel}</WheelHolder>
          <SidePanel colors={colors} tip={tip} />
        </Main>
        <Footer />
        <CloseBadge>x</CloseBadge>
        <Privacy><GearIcon /><Fit width={37}>Privacy</Fit></Privacy>
      </Page>
      <VScroll $edge={edge}><VArrow color="#aaa" /><VThumb /><VArrow down color="#222" /></VScroll>
    </Viewport>
  );
}

export default function App() {
  return (
    <>
      <GlobalStyle />
      <Desktop>
        <Windows>
          <Window>
            <LeftChrome />
            <BookmarkBar />
            <WheelPage
              edge
              lines={[['RPR Car', 84], ['Selection', 96]]}
              colors={['#ff0000', '#6371ff']}
              tip={[['Find the best', 69], ['meeting times for', 94], ['people across', 73], ['multiple', 43], ['timezones with', 80]]}
              wheel={
                <Wheel id="shadowCars" cut={-114.6} colorA="#ff0000" colorB="#6371ff" labelA="Ferrari" labelB="Williams" size={20} startA={57} lenA={65} startB={43} lenB={78} inkA="#3d0000" inkB="#0c1038" family="Lato, sans-serif">
                  <Medal />
                </Wheel>
              }
            />
          </Window>
          <Window>
            <RightChrome />
            <BookmarkBar active />
            <WheelPage
              lines={[['RPR Drivers', 122], ['wheel', 61]]}
              colors={['#d30d24', '#eab010']}
              tip={[['If the textbox', 70], ['above is too', 65], ['small, perform a', 85], ['hard refresh by', 80], ['hitting Control +', 88], ['Shift +', 36]]}
              wheel={
                <Wheel id="shadowDrivers" cut={-161.8} colorA="#d30d24" colorB="#eab010" labelA="Johnny/Chub" labelB="Rob/LewLew" size={13.5} startA={40} lenA={83} startB={42} lenB={80} inkA="#fff" inkB="#2d2200" family="Lato, sans-serif">
                  <Gamepad />
                </Wheel>
              }
            />
          </Window>
        </Windows>
        <Taskbar>
          <Weather><Fit width={11}>6°C</Fit><Fit width={31}>Light rain</Fit></Weather>
          <Tray><TrayIcons /></Tray>
          <Lang><Fit width={12}>ENG</Fit></Lang>
          <Clock><Fit width={14}>20:33</Fit><Fit width={29}>06/01/2022</Fit></Clock>
          <NoticeIcon />
        </Taskbar>
        <GoalBar>
          <Fit width={108}>My Sample Goal</Fit><GoalGap $width={145} />
          <Fit width={18}>36</Fit><Spacer /><Fit width={19}>48</Fit>
        </GoalBar>
        <CamFrame>
          <CamLightning />
          <CamName aria-hidden="true"><Fit width={274}>NEEVOGAMING</Fit></CamName>
          <CamNameFace><Fit width={274}>NEEVOGAMING</Fit></CamNameFace>
          <CamSpeckles>
            <svg width="274" height="16" viewBox="0 0 274 16"><path d={speckles} fill="none" stroke="#041523" strokeWidth="0.900" /></svg>
          </CamSpeckles>
        </CamFrame>
        <Alerts>
          <Alert><AlertLightning /><AlertName><Fit width={69}>SucaSCR</Fit></AlertName><AlertLabel><Fit width={69}>RECENT FOLLOW</Fit></AlertLabel></Alert>
          <Alert><AlertLightning /><AlertLabel><Fit width={88}>RECENT SUBSCRIBER</Fit></AlertLabel></Alert>
          <Alert><AlertLightning /><AlertLabel><Fit width={80}>RECENT DONATION</Fit></AlertLabel></Alert>
        </Alerts>
      </Desktop>
    </>
  );
}
